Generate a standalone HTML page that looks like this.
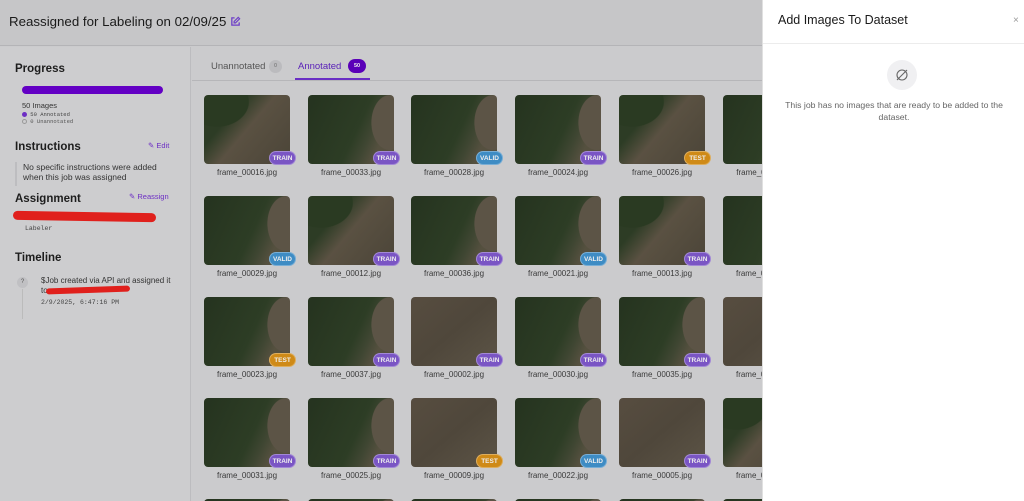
<!DOCTYPE html>
<html><head><meta charset="utf-8"><style>
*{box-sizing:border-box;margin:0;padding:0}
html,body{width:1024px;height:501px;overflow:hidden}
body{position:relative;background:#cbcbcd;font-family:"Liberation Sans",sans-serif;color:#222}
#wrap{position:absolute;left:0;top:0;width:1024px;height:501px;overflow:hidden;background:#cbcbcd}
.hdr{position:absolute;left:0;top:0;width:1024px;height:46px;background:#c6c6c8;border-bottom:1px solid #b4b4b7}
.hdr h1{position:absolute;left:9px;top:14px;font-size:13.3px;font-weight:normal;color:#1a1a1a}
.side{position:absolute;left:0;top:47px;width:191px;height:454px;background:#cdcdcf;border-right:1px solid #bcbcbf}
.abs{position:absolute}
.h2{font-size:11.5px;font-weight:bold;color:#1d1d1d}
.mono{font-family:"Liberation Mono",monospace}
.tabs{position:absolute;left:192px;top:47px;width:580px;height:34px;border-bottom:1px solid #b6b6b9}
.tile{position:absolute;width:86px;height:69px;border-radius:4px;overflow:hidden}
.F{background:radial-gradient(ellipse 30px 45px at 95% 40%,#5c5446 60%,transparent 62%),linear-gradient(115deg,#25331f 0%,#2d3d25 55%,#3f4632 68%,#55503f 80%)}
.M{background:radial-gradient(ellipse 45px 35px at 15% 10%,#2a3a22 70%,transparent 72%),linear-gradient(130deg,#2d3c25 30%,#5a5142 50%,#4e473a 90%)}
.D{background:linear-gradient(140deg,#574d40 0%,#4f473b 50%,#5c5446 100%)}
.b{position:absolute;height:14px;width:27px;border-radius:8px;color:#eee;font-size:6.5px;font-weight:bold;text-align:center;line-height:13px;border:1px solid rgba(255,255,255,.3)}
.tr{background:#7a55c4}.va{background:#3e8cc4}.te{background:#cf8a17}
.lab{position:absolute;width:86px;text-align:center;font-size:8px;color:#3a3a3a}
.panel{position:absolute;left:762px;top:0;width:262px;height:501px;background:#fff;border-left:1px solid #e0e0e0}
</style></head><body><div id="wrap">
<div class="hdr"><h1>Reassigned for Labeling on 02/09/25 <svg width="11" height="11" viewBox="0 0 12 12" style="vertical-align:-1px"><path d="M5 2H2v8h8V7" fill="none" stroke="#6d3fc7" stroke-width="1.4"/><path d="M9 1.5l1.5 1.5L6 7.5H4.5V6z" fill="none" stroke="#6d3fc7" stroke-width="1.3"/></svg></h1></div>
<div class="side">
<div class="abs h2" style="left:15px;top:16px">Progress</div>
<div class="abs" style="left:22px;top:39px;width:141px;height:8px;border-radius:4px;background:#6300c4"></div>
<div class="abs" style="left:22px;top:54px;font-size:7.5px;color:#333">50 Images</div>
<div class="abs mono" style="left:22px;top:64px;font-size:5.5px;color:#444"><span style="display:inline-block;width:5px;height:5px;border-radius:50%;background:#6d2fc4;vertical-align:-1px"></span> 50 Annotated</div>
<div class="abs mono" style="left:22px;top:71px;font-size:5.5px;color:#555"><span style="display:inline-block;width:5px;height:5px;border-radius:50%;border:1px solid #999;vertical-align:-1px"></span> 0 Unannotated</div>
<div class="abs h2" style="left:15px;top:94px">Instructions</div>
<div class="abs" style="left:148px;top:94px;font-size:7.5px;color:#6d2fc4">&#9998; Edit</div>
<div class="abs" style="left:15px;top:115px;width:2px;height:24px;background:#bdbdc0"></div>
<div class="abs" style="left:23px;top:115px;font-size:8.5px;line-height:10px;color:#333;width:145px">No specific instructions were added when this job was assigned</div>
<div class="abs h2" style="left:15px;top:146px">Assignment</div>
<div class="abs" style="left:129px;top:145px;font-size:7.5px;color:#6d2fc4">&#9998; Reassign</div>
<div class="abs" style="left:13px;top:165px;width:143px;height:9px;border-radius:5px;background:#e0201c;transform:rotate(1deg)"></div>
<div class="abs mono" style="left:25px;top:178px;font-size:6.5px;color:#444">Labeler</div>
<div class="abs h2" style="left:15px;top:205px">Timeline</div>
<div class="abs" style="left:17px;top:230px;width:11px;height:11px;border-radius:50%;background:#c0c0c3;font-size:6px;text-align:center;line-height:11px;color:#555">?</div>
<div class="abs" style="left:22px;top:242px;width:1px;height:30px;background:#bbb"></div>
<div class="abs" style="left:41px;top:229px;font-size:8px;line-height:10px;color:#333;width:132px">$Job created via API and assigned it to</div>
<div class="abs" style="left:46px;top:240px;width:84px;height:6px;border-radius:4px;background:#e0201c;transform:rotate(-2deg)"></div>
<div class="abs mono" style="left:41px;top:252px;font-size:6.5px;color:#444">2/9/2025, 6:47:16 PM</div>
</div>
<div class="tabs">
<div class="abs" style="left:19px;top:14px;font-size:9.5px;color:#555">Unannotated</div>
<div class="abs" style="left:77px;top:13px;width:13px;height:13px;border-radius:50%;background:#bbbbbe;font-size:5px;text-align:center;line-height:13px;color:#666">0</div>
<div class="abs" style="left:106px;top:14px;font-size:9.5px;color:#5a22b8">Annotated</div>
<div class="abs" style="left:156px;top:12px;width:18px;height:14px;border-radius:7px;background:#5a00b8;font-size:5.5px;font-weight:bold;text-align:center;line-height:14px;color:#eee">50</div>
<div class="abs" style="left:103px;top:31px;width:75px;height:2px;background:#6a2fc4"></div>
</div>

<div class="tile M" style="left:204px;top:95px"></div><div class="b tr" style="left:269px;top:151px">TRAIN</div><div class="lab" style="left:204px;top:168px">frame_00016.jpg</div>
<div class="tile F" style="left:308px;top:95px"></div><div class="b tr" style="left:373px;top:151px">TRAIN</div><div class="lab" style="left:308px;top:168px">frame_00033.jpg</div>
<div class="tile F" style="left:411px;top:95px"></div><div class="b va" style="left:476px;top:151px">VALID</div><div class="lab" style="left:411px;top:168px">frame_00028.jpg</div>
<div class="tile F" style="left:515px;top:95px"></div><div class="b tr" style="left:580px;top:151px">TRAIN</div><div class="lab" style="left:515px;top:168px">frame_00024.jpg</div>
<div class="tile M" style="left:619px;top:95px"></div><div class="b te" style="left:684px;top:151px">TEST</div><div class="lab" style="left:619px;top:168px">frame_00026.jpg</div>
<div class="tile F" style="left:723px;top:95px"></div><div class="lab" style="left:723px;top:168px">frame_00011.jpg</div>

<div class="tile F" style="left:204px;top:196px"></div><div class="b va" style="left:269px;top:252px">VALID</div><div class="lab" style="left:204px;top:269px">frame_00029.jpg</div>
<div class="tile M" style="left:308px;top:196px"></div><div class="b tr" style="left:373px;top:252px">TRAIN</div><div class="lab" style="left:308px;top:269px">frame_00012.jpg</div>
<div class="tile F" style="left:411px;top:196px"></div><div class="b tr" style="left:476px;top:252px">TRAIN</div><div class="lab" style="left:411px;top:269px">frame_00036.jpg</div>
<div class="tile F" style="left:515px;top:196px"></div><div class="b va" style="left:580px;top:252px">VALID</div><div class="lab" style="left:515px;top:269px">frame_00021.jpg</div>
<div class="tile M" style="left:619px;top:196px"></div><div class="b tr" style="left:684px;top:252px">TRAIN</div><div class="lab" style="left:619px;top:269px">frame_00013.jpg</div>
<div class="tile F" style="left:723px;top:196px"></div><div class="lab" style="left:723px;top:269px">frame_00014.jpg</div>

<div class="tile F" style="left:204px;top:297px"></div><div class="b te" style="left:269px;top:353px">TEST</div><div class="lab" style="left:204px;top:370px">frame_00023.jpg</div>
<div class="tile F" style="left:308px;top:297px"></div><div class="b tr" style="left:373px;top:353px">TRAIN</div><div class="lab" style="left:308px;top:370px">frame_00037.jpg</div>
<div class="tile D" style="left:411px;top:297px"></div><div class="b tr" style="left:476px;top:353px">TRAIN</div><div class="lab" style="left:411px;top:370px">frame_00002.jpg</div>
<div class="tile F" style="left:515px;top:297px"></div><div class="b tr" style="left:580px;top:353px">TRAIN</div><div class="lab" style="left:515px;top:370px">frame_00030.jpg</div>
<div class="tile F" style="left:619px;top:297px"></div><div class="b tr" style="left:684px;top:353px">TRAIN</div><div class="lab" style="left:619px;top:370px">frame_00035.jpg</div>
<div class="tile D" style="left:723px;top:297px"></div><div class="lab" style="left:723px;top:370px">frame_00003.jpg</div>

<div class="tile F" style="left:204px;top:398px"></div><div class="b tr" style="left:269px;top:454px">TRAIN</div><div class="lab" style="left:204px;top:471px">frame_00031.jpg</div>
<div class="tile F" style="left:308px;top:398px"></div><div class="b tr" style="left:373px;top:454px">TRAIN</div><div class="lab" style="left:308px;top:471px">frame_00025.jpg</div>
<div class="tile D" style="left:411px;top:398px"></div><div class="b te" style="left:476px;top:454px">TEST</div><div class="lab" style="left:411px;top:471px">frame_00009.jpg</div>
<div class="tile F" style="left:515px;top:398px"></div><div class="b va" style="left:580px;top:454px">VALID</div><div class="lab" style="left:515px;top:471px">frame_00022.jpg</div>
<div class="tile D" style="left:619px;top:398px"></div><div class="b tr" style="left:684px;top:454px">TRAIN</div><div class="lab" style="left:619px;top:471px">frame_00005.jpg</div>
<div class="tile M" style="left:723px;top:398px"></div><div class="lab" style="left:723px;top:471px">frame_00007.jpg</div>

<div class="tile F" style="left:204px;top:499px"></div><div class="tile F" style="left:308px;top:499px"></div><div class="tile F" style="left:411px;top:499px"></div><div class="tile F" style="left:515px;top:499px"></div><div class="tile F" style="left:619px;top:499px"></div><div class="tile F" style="left:723px;top:499px"></div>

<div class="panel">
<div class="abs" style="left:15px;top:13px;font-size:12.5px;color:#1a1a1a">Add Images To Dataset</div>
<div class="abs" style="left:250px;top:15px;font-size:10px;color:#999">×</div>
<div class="abs" style="left:0;top:43px;width:262px;height:1px;background:#ececec"></div>
<div class="abs" style="left:124px;top:60px;width:30px;height:30px;border-radius:50%;background:#f0f0f2"><svg width="30" height="30" viewBox="0 0 30 30"><circle cx="15" cy="15" r="5" fill="none" stroke="#666" stroke-width="1.1"/><path d="M10 20L20 10" stroke="#666" stroke-width="1.1"/></svg></div>
<div class="abs" style="left:16px;top:99px;width:230px;text-align:center;font-size:8.7px;line-height:12px;color:#666">This job has no images that are ready to be added to the dataset.</div>
</div>
</div></body></html>
